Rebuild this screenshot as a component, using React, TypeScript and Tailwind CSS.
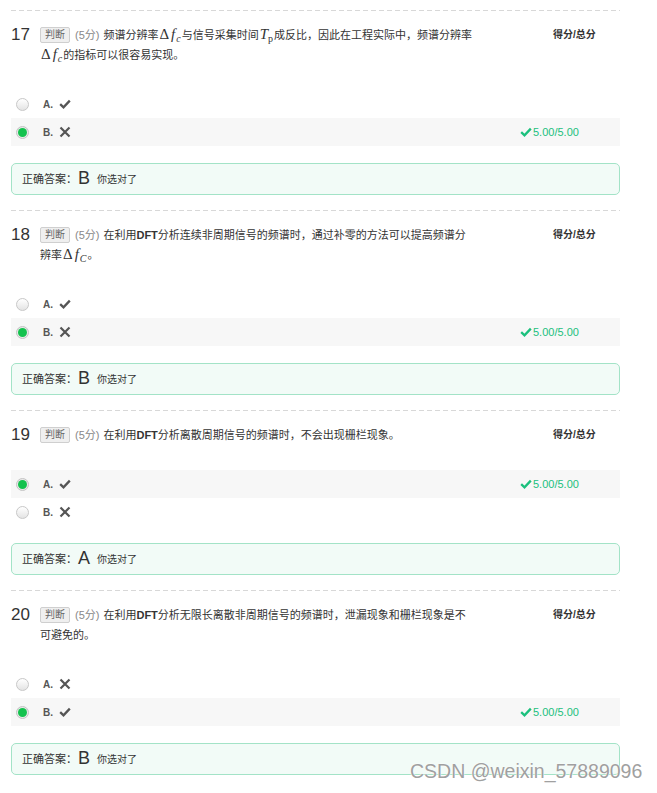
import React from "react";

type Seg = string | { m: "dfc" | "dfC" | "tp" } | { b: string };

type Q = {
  n: number;
  lines: Seg[][];
  opts: { label: string; icon: "check" | "x" }[];
  sel: number;
  ans: string;
};

const questions: Q[] = [
  {
    n: 17,
    lines: [
      ["频谱分辨率", { m: "dfc" }, "与信号采集时间", { m: "tp" }, "成反比，因此在工程实际中，频谱分辨率"],
      [{ m: "dfc" }, "的指标可以很容易实现。"],
    ],
    opts: [
      { label: "A.", icon: "check" },
      { label: "B.", icon: "x" },
    ],
    sel: 1,
    ans: "B",
  },
  {
    n: 18,
    lines: [
      ["在利用", { b: "DFT" }, "分析连续非周期信号的频谱时，通过补零的方法可以提高频谱分"],
      ["辨率", { m: "dfC" }, "。"],
    ],
    opts: [
      { label: "A.", icon: "check" },
      { label: "B.", icon: "x" },
    ],
    sel: 1,
    ans: "B",
  },
  {
    n: 19,
    lines: [["在利用", { b: "DFT" }, "分析离散周期信号的频谱时，不会出现栅栏现象。"]],
    opts: [
      { label: "A.", icon: "check" },
      { label: "B.", icon: "x" },
    ],
    sel: 0,
    ans: "A",
  },
  {
    n: 20,
    lines: [
      ["在利用", { b: "DFT" }, "分析无限长离散非周期信号的频谱时，泄漏现象和栅栏现象是不"],
      ["可避免的。"],
    ],
    opts: [
      { label: "A.", icon: "x" },
      { label: "B.", icon: "check" },
    ],
    sel: 1,
    ans: "B",
  },
];

function Math({ k }: { k: "dfc" | "dfC" | "tp" }) {
  if (k === "tp") {
    return (
      <span className="font-['Liberation_Serif',serif] text-[15px] leading-[20px] text-[#333] mx-[1px]">
        <i>T</i>
        <span className="text-[10px] relative top-[3px]">p</span>
      </span>
    );
  }
  return (
    <span className="font-['Liberation_Serif',serif] text-[15px] leading-[20px] text-[#333] mx-[1px]">
      Δ<i className="ml-[2px]">f</i>
      <i className="text-[10px] relative top-[3px] ml-[1px]">{k === "dfc" ? "c" : "C"}</i>
    </span>
  );
}

function Segs({ segs }: { segs: Seg[] }) {
  return (
    <>
      {segs.map((s, i) => {
        if (typeof s === "string") return <span key={i}>{s}</span>;
        if ("m" in s) return <Math key={i} k={s.m} />;
        return (
          <span key={i} className="font-bold">
            {s.b}
          </span>
        );
      })}
    </>
  );
}

function CheckIcon({ color = "#555" }: { color?: string }) {
  return (
    <svg width="12" height="10" viewBox="0 0 12 10">
      <path d="M1.2 5.2 L4.5 8.3 L10.8 1.6" fill="none" stroke={color} strokeWidth="2.3" strokeLinecap="butt" />
    </svg>
  );
}

function XIcon() {
  return (
    <svg width="12" height="12" viewBox="0 0 12 12">
      <path d="M1.5 1.5 L10.5 10.5 M10.5 1.5 L1.5 10.5" fill="none" stroke="#555" strokeWidth="2.2" />
    </svg>
  );
}

function Radio({ on }: { on: boolean }) {
  if (on) {
    return (
      <div className="w-[13px] h-[13px] rounded-full border border-[#c4c4c4] bg-[#e9e9e9] flex items-center justify-center">
        <div className="w-[9px] h-[9px] rounded-full bg-[#14c24e]" />
      </div>
    );
  }
  return (
    <div className="w-[13px] h-[13px] rounded-full border border-[#c8c8c8] bg-gradient-to-b from-[#ffffff] to-[#e4e4e4]" />
  );
}

function Dashed() {
  return (
    <div className="h-[1px] w-full bg-[linear-gradient(to_right,#d8d8d8_5px,transparent_5px)] bg-[length:8px_1px] bg-repeat-x" />
  );
}

function Question({ q }: { q: Q }) {
  return (
    <div>
      <Dashed />
      <div className="pt-[14px] pb-[15px]">
        <div className="flex">
          <div className="w-[29px] text-[17px] leading-[20px] text-[#333]">{q.n}</div>
          <div className="flex-1 text-[11px] leading-[20px] text-[#333]">
            {q.lines.map((line, li) => (
              <div key={li} className="flex items-center whitespace-nowrap h-[20px]">
                {li === 0 && (
                  <>
                    <span className="inline-flex items-center h-[16px] px-[4px] border border-[#cfcfcf] bg-[#efefef] text-[#666] text-[10px] rounded-[2px]">
                      判断
                    </span>
                    <span className="ml-[5px] mr-[4px] text-[#888]">(5分)</span>
                  </>
                )}
                <Segs segs={line} />
              </div>
            ))}
          </div>
          <div className="w-[67px] text-[10px] font-bold leading-[20px] text-[#333]">得分/总分</div>
        </div>
        <div className="mt-[25px]">
          {q.opts.map((o, i) => {
            const on = i === q.sel;
            return (
              <div key={i} className={`flex items-center h-[28px] ${on ? "bg-[#f7f7f7]" : ""}`}>
                <div className="w-[32px] pl-[5px] flex items-center">
                  <Radio on={on} />
                </div>
                <span className="text-[10px] font-bold text-[#555] w-[16px]">{o.label}</span>
                <span className="flex items-center w-[14px]">{o.icon === "check" ? <CheckIcon /> : <XIcon />}</span>
                <div className="flex-1" />
                <div className="w-[100px] flex items-center text-[11px] text-[#1bc07d]">
                  {on && (
                    <>
                      <CheckIcon color="#1bc07d" />
                      <span className="ml-[1px]">5.00/5.00</span>
                    </>
                  )}
                </div>
              </div>
            );
          })}
        </div>
        <div className="mt-[17px] h-[32px] rounded-[5px] border border-[#a3e3c7] bg-[#f2fbf7] flex items-center pl-[10px] text-[#333]">
          <span className="text-[11px]">正确答案：</span>
          <span className="text-[18px] leading-none ml-[1px] mb-[2px]">{q.ans}</span>
          <span className="text-[10px] ml-[7px]">你选对了</span>
        </div>
      </div>
    </div>
  );
}

export default function App() {
  return (
    <div className="relative w-[657px] h-[793px] overflow-hidden bg-white pt-[10px] pl-[11px] font-['Liberation_Sans','Noto_Sans_CJK_SC',sans-serif]">
      <div className="w-[609px]">
        {questions.map((q) => (
          <Question key={q.n} q={q} />
        ))}
      </div>
      <div className="absolute left-[410px] top-[762px] text-[19.5px] leading-none text-[#a0a0a0] [text-shadow:0_0_2px_#fff,0_0_1px_#fff]">
        CSDN @weixin_57889096
      </div>
    </div>
  );
}
